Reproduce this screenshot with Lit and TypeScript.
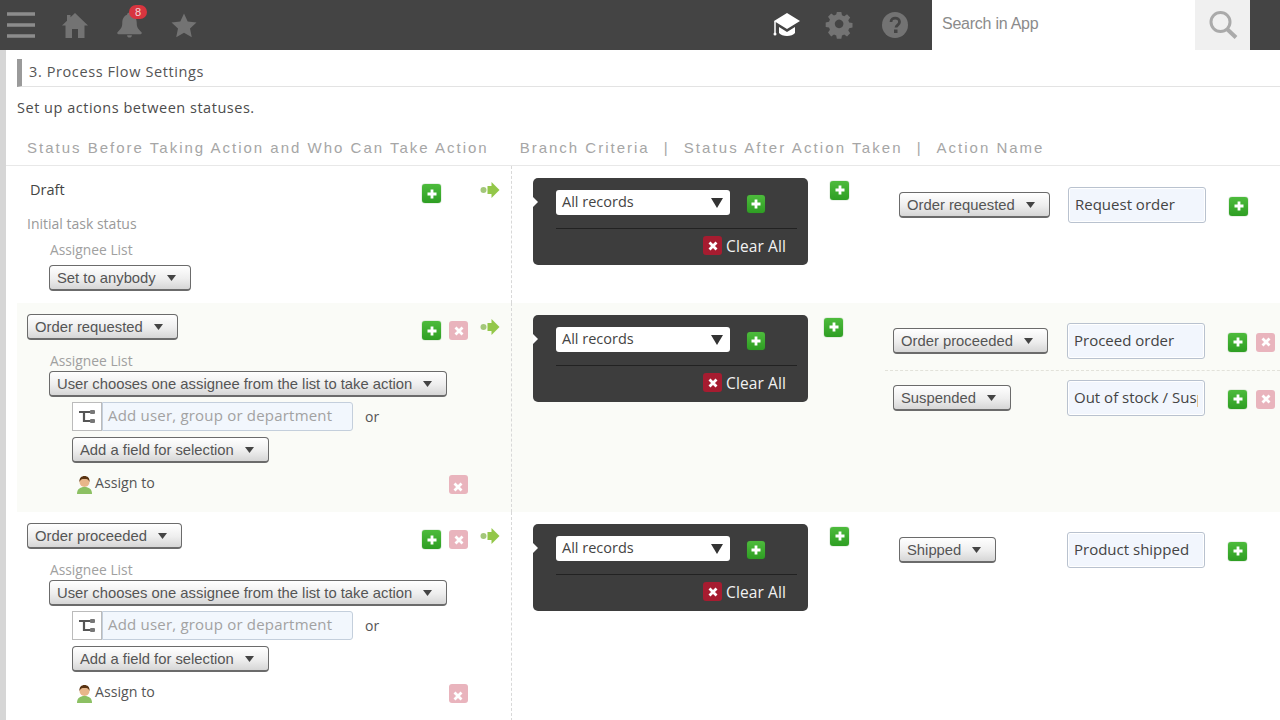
import { LitElement, html, css } from 'lit';
import { customElement } from 'lit/decorators.js';

const plus = html`<span class="sq add"><svg width="10" height="10" viewBox="0 0 10 10"><path d="M5 .5v9M.5 5h9" stroke="#fff" stroke-width="2.8"/></svg></span>`;
const del = html`<span class="sq del"><svg width="10" height="10" viewBox="0 0 10 10"><path d="M1.5 1.5l7 7M8.5 1.5l-7 7" stroke="#fff" stroke-width="2.8"/></svg></span>`;
const delStrong = html`<span class="sq del strong"><svg width="10" height="10" viewBox="0 0 10 10"><path d="M1.500 1.500l7 7M8.500 1.500l-7 7" stroke="#fff" stroke-width="2.8"/></svg></span>`;
const arrow = html`<svg class="arrow" width="20" height="18" viewBox="0 0 20 18"><circle cx="3.500" cy="9" r="3" fill="#a3c77a"/><path d="M7.500 5h4V1l8 8-8 8v-4h-4z" fill="#93c749"/></svg>`;
const caret = html`<svg class="caret" width="9" height="6" viewBox="0 0 9 6"><path d="M0 0h9L4.500 6z" fill="#444"/></svg>`;

const drop = (label: string) => html`<span class="drop">${label}${caret}</span>`;

type Flow = { select: string; action: string };
type Row = {
  status: string;
  initial?: boolean;
  canDelete?: boolean;
  offset: number;
  slot: number;
  height: number;
  flowTop: number;
  flows: Flow[];
};

const rows: Row[] = [
  { status: 'Draft', initial: true, offset: 22, slot: 169, height: 137, flowTop: 9, flows: [{ select: 'Order requested', action: 'Request order' }] },
  {
    status: 'Order requested', canDelete: true, offset: 16, slot: 174, height: 209, flowTop: 8,
    flows: [
      { select: 'Order proceeded', action: 'Proceed order' },
      { select: 'Suspended', action: 'Out of stock / Suspended' },
    ],
  },
  { status: 'Order proceeded', canDelete: true, offset: 22, slot: 168, height: 209, flowTop: 8, flows: [{ select: 'Shipped', action: 'Product shipped' }] },
];

@customElement('app-root')
export class AppRoot extends LitElement {
  static styles = css`
    :host {
      display: block;
      width: 1280px;
      height: 720px;
      overflow: hidden;
      background: #fff;
      font-family: 'Open Sans', 'Liberation Sans', sans-serif;
      color: #444;
    }
    .top {
      display: flex;
      align-items: center;
      height: 50px;
      background: #444;
      padding-right: 30px;
    }
    .top svg { display: block; flex: none; }
    .burger { margin-left: 7px; }
    .home { margin-left: 27px; }
    .bell-wrap { position: relative; margin-left: 28px; }
    .badge {
      position: absolute;
      top: -6px;
      left: 13px;
      width: 18px;
      height: 14px;
      border-radius: 7px;
      background: #d8353f;
      color: #f3d9d9;
      font: 11px/14px 'Liberation Sans', sans-serif;
      text-align: center;
    }
    .star { margin-left: 28px; }
    .spacer { flex: 1; }
    .gear { margin-left: 23px; }
    .help { margin-left: 29px; margin-right: 24px; }
    .search {
      display: flex;
      align-items: center;
      box-sizing: border-box;
      width: 263px;
      height: 50px;
      padding: 0 0 2px 10px;
      background: #fff;
      color: #8b8b8b;
      font: 16px 'Liberation Sans', sans-serif;
      letter-spacing: -0.25px;
    }
    .search-btn {
      display: flex;
      align-items: center;
      justify-content: center;
      width: 55px;
      height: 50px;
      background: #f0f0f0;
    }
    .page {
      box-sizing: border-box;
      border-left: 6px solid #d6d6d6;
      padding-top: 9px;
      height: 670px;
    }
    .title {
      margin-left: 11px;
      height: 27px;
      border-left: 5px solid #9a9a9a;
      border-bottom: 1px solid #e3e3e3;
      padding-left: 7px;
      font-size: 14.5px;
      line-height: 26px;
      letter-spacing: 0.6px;
      color: #555;
    }
    .intro {
      margin: 10px 0 0 11px;
      font-size: 14.5px;
      line-height: 22px;
      letter-spacing: 0.52px;
      color: #4c4c4c;
    }
    .cols {
      display: flex;
      height: 36px;
      align-items: center;
      margin-top: 10px;
      border-bottom: 1px solid #e8e8e8;
      padding-left: 21px;
      font: 15px 'Liberation Sans', sans-serif;
      letter-spacing: 2px;
      color: #a6a6a6;
      white-space: nowrap;
    }
    .cols .second { display: flex; gap: 14px; margin-left: 31px; }
    .cols .wide { letter-spacing: 2.1px; }
    .row { display: flex; margin-left: 11px; }
    .row.shade { background: #fafbf7; }
    .left {
      width: 495px;
      flex: none;
      box-sizing: border-box;
      padding: 11px 11px 0 10px;
      border-right: 1px dashed #d8d8d8;
    }
    .head { display: flex; align-items: flex-start; height: 26px; }
    .name { font-size: 14.5px; line-height: 24px; margin-top: 1px; padding-left: 3px; color: #444; }
    .head .tools {
      display: flex;
      gap: 8px;
      margin-left: auto;
      margin-top: 7px;
      width: 58px;
    }
    .head .arrow { margin: 4px 0 0 0; flex: none; }
    .initial { margin-top: 12px; font-size: 14px; line-height: 18px; color: #999; }
    .label { font-size: 13.8px; line-height: 18px; color: #a0a0a0; margin-left: 23px; }
    .first { margin-top: 8px; }
    .assignee { margin-top: 12px; }
    .indent { margin-left: 22px; }
    .indent.single { margin-top: 6px; }
    .indent.multi { margin-top: 1px; }
    .drop {
      display: inline-flex;
      align-items: center;
      gap: 11px;
      box-sizing: border-box;
      height: 26px;
      padding: 0 14px 0 7px;
      border: 1px solid #6b6b6b;
      border-bottom-width: 2px;
      border-radius: 4px;
      background: linear-gradient(#fff, #eee 55%, #d6d6d6);
      font: 14.8px 'Liberation Sans', sans-serif;
      color: #555;
      white-space: nowrap;
    }
    .picker { display: flex; align-items: center; margin: 5px 0 0 23px; }
    .tree {
      display: flex;
      align-items: center;
      justify-content: center;
      box-sizing: border-box;
      width: 30px;
      height: 29px;
      border: 1px solid #bbb;
      background: #fff;
    }
    .who {
      box-sizing: border-box;
      width: 251px;
      height: 29px;
      padding-left: 5px;
      border: 1px solid #c4cfdc;
      border-radius: 0 3px 3px 0;
      background: #f2f7fd;
      font-size: 15px;
      line-height: 25px;
      letter-spacing: 0.2px;
      color: #a2a2a2;
    }
    .or { margin-left: 12px; font-size: 14px; color: #555; }
    .field { margin: 6px 0 0 23px; }
    .assign {
      display: flex;
      align-items: center;
      margin: 9px 0 0 27px;
      height: 20px;
      font-size: 14.2px;
      color: #555;
    }
    .assign svg { margin-right: 2px; margin-top: 4px; }
    .assign .sq { margin-left: auto; margin-right: 32px; margin-top: 5px; }
    .right {
      flex: 1;
      display: flex;
      align-items: flex-start;
      padding: 12px 0 0 21px;
    }
    .panel {
      position: relative;
      flex: none;
      box-sizing: border-box;
      width: 275px;
      height: 87px;
      padding: 12px 11px 0 23px;
      background: #3d3d3d;
      border-radius: 5px;
    }
    .panel::before {
      content: '';
      position: absolute;
      left: 0;
      top: 19px;
      border: 5px solid transparent;
      border-left-color: #fff;
    }
    .cond { display: flex; align-items: center; gap: 17px; height: 25px; }
    .cond .sq { margin-top: 2px; }
    .all {
      display: flex;
      align-items: center;
      justify-content: space-between;
      box-sizing: border-box;
      width: 174px;
      height: 25px;
      padding: 0 7px 2px 6px;
      background: #fff;
      border-radius: 3px;
      font-size: 14.5px;
      color: #444;
    }
    .all i {
      width: 0;
      height: 0;
      margin-top: 2px;
      border: 6px solid transparent;
      border-top: 10px solid #333;
      border-bottom: 0;
    }
    .rule { height: 1px; margin-top: 13px; background: #222; }
    .clear {
      display: flex;
      justify-content: flex-end;
      align-items: center;
      gap: 4px;
      height: 19px;
      margin-top: 7px;
      padding-right: 11px;
      color: #f2f2f2;
      font-size: 15.5px;
      letter-spacing: 0.1px;
    }
    .panel-add { flex: none; }
    .flows { flex: 1; min-width: 0; margin-left: 50px; }
    .flow {
      display: flex;
      align-items: center;
      height: 36px;
    }
    .flow + .flow { margin-top: 11px; padding-top: 9px; border-top: 1px dashed #e2e2da; margin-left: -8px; padding-left: 8px; }
    .slot { flex: none; }
    .action {
      box-sizing: border-box;
      flex: none;
      width: 138px;
      height: 36px;
      margin: 0;
      padding: 0 6px 3px;
      border: 1px solid #b9c2cf;
      border-radius: 3px;
      background: #f2f6fd;
      box-shadow: inset 0 0 0 1px #fff;
      font: 15px 'Open Sans', sans-serif;
      color: #444;
      outline: none;
    }
    .flow-tools { display: flex; gap: 9px; margin-left: 23px; margin-top: 2px; }
    .sq {
      display: inline-flex;
      align-items: center;
      justify-content: center;
      flex: none;
      width: 19px;
      height: 19px;
      border-radius: 3px;
    }
    .add {
      background: linear-gradient(#4dbb3c, #2e9e23);
      box-shadow: 0 0 1px #2a7d20;
    }
    .del { background: #e9b4bd; }
    .del.strong { background: #a61c30; }
    .panel .add { width: 18px; height: 18px; }
  `;

  renderLeft(r: Row) {
    return html`<div class="left">
      <div class="head">
        ${r.initial ? html`<span class="name">${r.status}</span>` : drop(r.status)}
        <span class="tools">${plus}${r.canDelete ? del : ''}</span>
        ${arrow}
      </div>
      ${r.initial
        ? html`<div class="initial">Initial task status</div>
            <div class="label first">Assignee List</div>
            <div class="indent single">${drop('Set to anybody')}</div>`
        : html`<div class="label assignee">Assignee List</div>
            <div class="indent multi">${drop('User chooses one assignee from the list to take action')}</div>
            <div class="indent">
              <div class="picker">
                <span class="tree"><svg width="18" height="16" viewBox="0 0 18 16"><path d="M1 3h11M6 3v9h6" fill="none" stroke="#555" stroke-width="2.200"/><rect x="12" y="1" width="5" height="4" rx="1" fill="#777"/><rect x="12" y="10" width="5" height="4" rx="1" fill="#777"/></svg></span>
                <span class="who">Add user, group or department</span>
                <span class="or">or</span>
              </div>
              <div class="field">${drop('Add a field for selection')}</div>
              <div class="assign">
                <svg width="17" height="19" viewBox="0 0 17 19"><path d="M1 19c0-5 3-7 7.500-7s7.500 2 7.500 7z" fill="#8cc063"/><circle cx="8.500" cy="7" r="5" fill="#e8b68a"/><path d="M3.500 7c-.5-4 2-6 5-6s5.500 2 5 6c-1-2.500-2-3-5-3s-4 .5-5 3z" fill="#5a3413"/></svg>
                Assign to
                ${del}
              </div>
            </div>`}
    </div>`;
  }

  renderRight(r: Row, showDelete: boolean) {
    return html`<div class="right">
      <div class="panel">
        <div class="cond"><span class="all">All records<i></i></span>${plus}</div>
        <div class="rule"></div>
        <div class="clear">${delStrong}Clear All</div>
      </div>
      <span class="panel-add" style="margin-left:${r.offset}px">${plus}</span>
      <div class="flows" style="margin-top:${r.flowTop}px">
        ${r.flows.map(
          (f) => html`<div class="flow">
            <span class="slot" style="width:${r.slot}px">${drop(f.select)}</span>
            <input class="action" readonly .value=${f.action} />
            <span class="flow-tools">${plus}${showDelete ? del : ''}</span>
          </div>`
        )}
      </div>
    </div>`;
  }

  render() {
    return html`
      <div class="top">
        <svg class="burger" width="28" height="28" viewBox="0 0 28 28"><path d="M0 3h28M0 14h28M0 25h28" stroke="#8c8c8c" stroke-width="3.500"/></svg>
        <svg class="home" width="26" height="27" viewBox="0 0 26 27"><path d="M13 1l13 12.500h-3.500V26H16v-9h-6v9H3.500V13.500H0L5 8.700V3h3.500v2.300z" fill="#737373"/></svg>
        <span class="bell-wrap">
          <svg width="27" height="28" viewBox="0 0 28 28"><path d="M14 1c1.500 0 2.500 1 2.500 2.300C20 4.500 21.500 8 21.500 12c0 4 1 6 5 9.500.5 1 0 2-1 2H2.500c-1 0-1.500-1-1-2 4-3.500 5-5.500 5-9.500 0-4 1.500-7.500 5-8.700C11.500 2 12.500 1 14 1zM11.500 24.500h5c0 1.500-1 2.500-2.500 2.500s-2.500-1-2.500-2.500z" fill="#737373"/></svg>
          <span class="badge">8</span>
        </span>
        <svg class="star" width="26" height="27" viewBox="0 0 26 26"><path d="M13 1l3.700 8 8.800 1-6.500 6 1.800 8.700L13 20.300l-7.800 4.400L7 16 .5 10l8.800-1z" fill="#737373"/></svg>
        <span class="spacer"></span>
        <svg width="30" height="30" viewBox="0 0 30 30"><path d="M15 3l13 8-13 8-13-8z" fill="#fff"/><path d="M7 17v6c3 4 13 4 16 0v-6l-8 5z" fill="#fff"/><path d="M3 11v12" stroke="#fff" stroke-width="1.500"/><circle cx="3" cy="24" r="1.500" fill="#fff"/></svg>
        <svg class="gear" width="28" height="28" viewBox="0 0 28 28"><path d="M11.500 1h5l.7 3.700 2.500 1 3.100-2.100 3.500 3.500-2.100 3.100 1 2.500 3.700.7v5l-3.700.7-1 2.500 2.100 3.100-3.500 3.500-3.100-2.100-2.500 1-.7 3.700h-5l-.7-3.700-2.500-1-3.100 2.100L1.700 24l2.100-3.100-1-2.500L-.9 17.700v-5l3.700-.7 1-2.500L1.700 6.400 5.200 2.900l3.100 2.100 2.500-1z M14 9.500a4.800 4.800 0 1 0 .01 0z" fill="#737373" fill-rule="evenodd" transform="translate(1.500 0) scale(.9)"/></svg>
        <svg class="help" width="26" height="26" viewBox="0 0 26 26"><circle cx="13" cy="13" r="13" fill="#737373"/><path d="M9 10c0-2.500 2-3.800 4.200-3.800S17.500 7.600 17.500 10c0 3-3.500 3-3.500 5.500" fill="none" stroke="#444" stroke-width="2.800"/><rect x="12" y="17.500" width="3.500" height="3.500" fill="#444"/></svg>
        <div class="search">Search in App</div>
        <div class="search-btn"><svg width="30" height="30" viewBox="0 0 30 30"><circle cx="12.500" cy="12" r="9.500" fill="none" stroke="#aaa" stroke-width="3"/><path d="M19 19l9 8.500" stroke="#aaa" stroke-width="4"/></svg></div>
      </div>
      <div class="page">
        <div class="title">3. Process Flow Settings</div>
        <div class="intro">Set up actions between statuses.</div>
        <div class="cols">
          <span>Status Before Taking Action and Who Can Take Action</span>
          <span class="second"><span>Branch Criteria</span><span>|</span><span class="wide">Status After Action Taken</span><span>|</span><span>Action Name</span></span>
        </div>
        ${rows.map(
          (r, i) => html`<div class="row ${i === 1 ? 'shade' : ''}" style="height:${r.height}px">
            ${this.renderLeft(r)}${this.renderRight(r, i === 1)}
          </div>`
        )}
      </div>
    `;
  }
}
